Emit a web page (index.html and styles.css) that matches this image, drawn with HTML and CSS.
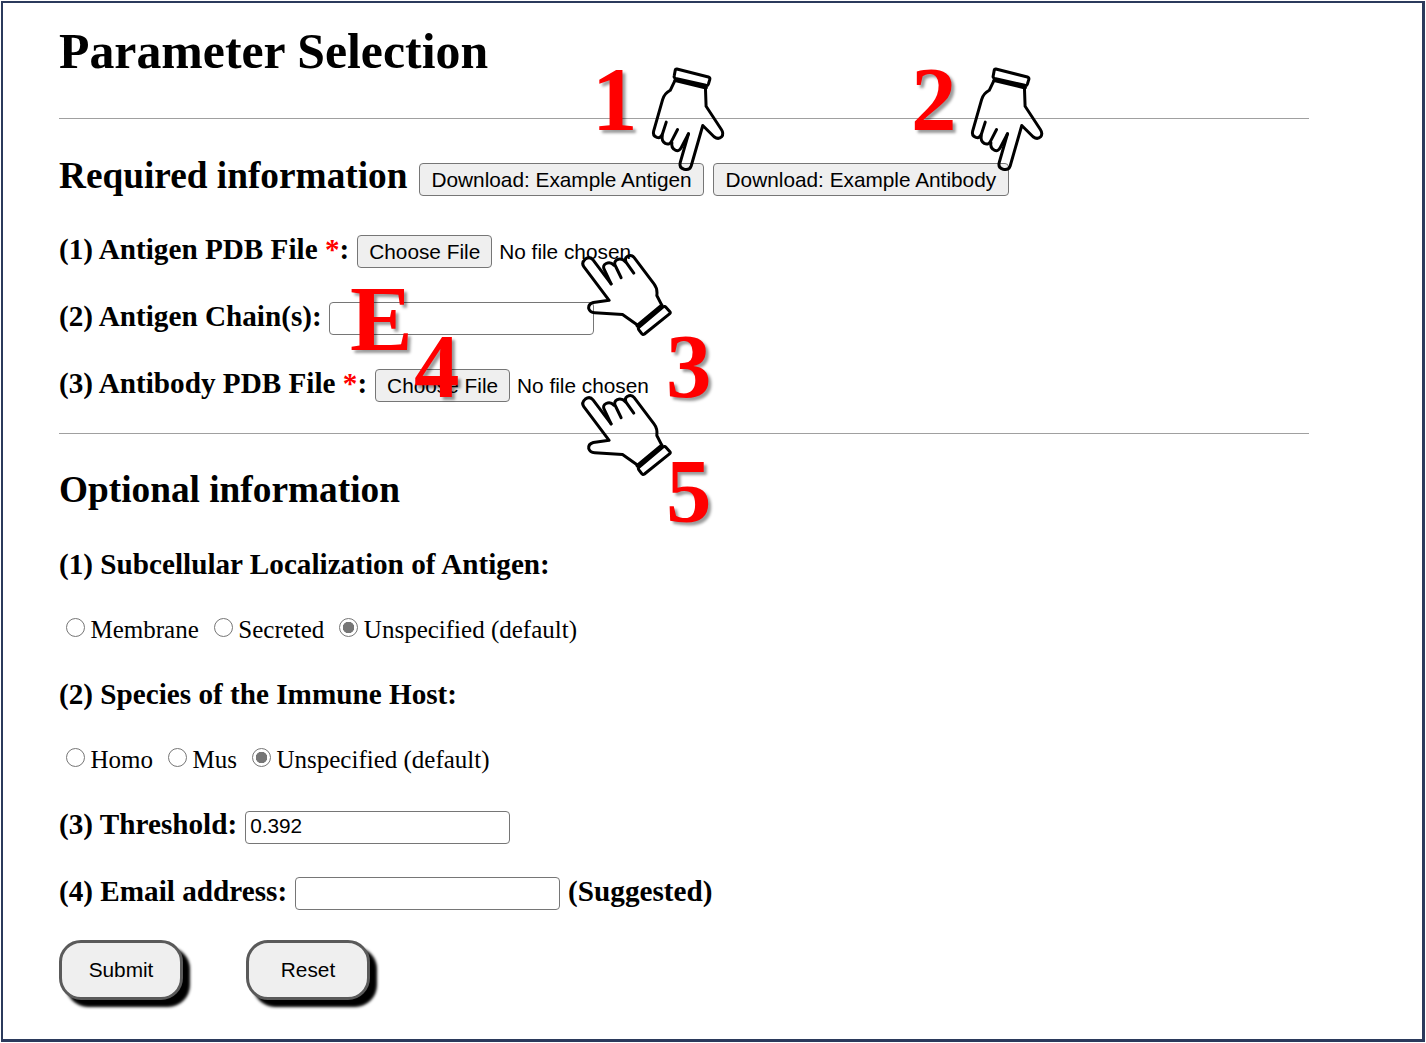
FILE: index.html
```html
<!DOCTYPE html>
<html lang="en">
<head>
  <meta charset="UTF-8" />
  <title>Parameter Selection</title>
  <link rel="stylesheet" href="styles.css">
</head>
<body>
  <svg class="defs" width="0" height="0">
    <symbol id="hand" viewBox="200 40 250 340">
      <path class="hand-line" d="M290 58 L385 82 Q391 84 389 90 L385 103 Q383 109 377 107 L286 86 Q280 84 282 78 L285 62 Q286 57 290 58 Z"/>
      <path class="hand-line hand-wrist" d="M285 92 L378 114"/>
      <path class="hand-line" d="M283 95 L270 122 Q252 132 247 150 L220 245 Q216 258 230 264 Q240 268 246 255 L258 218"/>
      <path class="hand-line" d="M246 258 Q243 275 255 282 Q268 288 274 275 L292 240"/>
      <path class="hand-line" d="M275 280 Q272 295 285 302 Q297 308 303 295 L325 253"/>
      <path class="hand-line" d="M325 253 L300 340 Q296 355 312 360 Q328 364 333 350 L368 228 L402 262 Q415 272 425 262 Q432 252 424 240 L378 170 L376 114"/>
    </symbol>
  </svg>

  <div class="page">
    <h1>Parameter Selection</h1>
    <hr>

    <form class="params">
      <div class="row row-head">
        <h2>Required information</h2>
        <button type="button" class="btn-download">Download: Example Antigen</button>
        <button type="button" class="btn-download btn-antibody">Download: Example Antibody</button>
      </div>

      <div class="row row-first">
        <label class="field-label label-file">(1) Antigen PDB File <span class="req">*</span>:</label>
        <input type="file" class="file-input">
      </div>

      <div class="row">
        <label class="field-label">(2) Antigen Chain(s):</label>
        <input type="text" class="text-input">
      </div>

      <div class="row">
        <label class="field-label label-file">(3) Antibody PDB File <span class="req">*</span>:</label>
        <input type="file" class="file-input">
      </div>

      <hr class="rule-2">

      <h2 class="optional">Optional information</h2>

      <div class="field-label block-label block-first">(1) Subcellular Localization of Antigen:</div>
      <div class="radios">
        <label class="radio"><input type="radio" name="loc">Membrane</label>
        <label class="radio"><input type="radio" name="loc">Secreted</label>
        <label class="radio"><input type="radio" name="loc" checked>Unspecified (default)</label>
      </div>

      <div class="field-label block-label">(2) Species of the Immune Host:</div>
      <div class="radios">
        <label class="radio"><input type="radio" name="host">Homo</label>
        <label class="radio"><input type="radio" name="host">Mus</label>
        <label class="radio"><input type="radio" name="host" checked>Unspecified (default)</label>
      </div>

      <div class="row row-threshold">
        <label class="field-label">(3) Threshold:</label>
        <input type="text" class="text-input" value="0.392">
      </div>

      <div class="row row-email">
        <label class="field-label">(4) Email address:</label>
        <input type="text" class="text-input">
        <span class="field-label">(Suggested)</span>
      </div>

      <div class="actions">
        <button type="button" class="btn-action">Submit</button>
        <button type="reset" class="btn-action">Reset</button>
      </div>
    </form>
  </div>

  <!-- annotations on top of the form -->
  <span class="mark mark-1">1</span>
  <span class="mark mark-2">2</span>
  <span class="mark mark-3">3</span>
  <span class="mark mark-4">4</span>
  <span class="mark mark-5">5</span>
  <span class="mark mark-e">E</span>
  <svg class="hand hand-1"><use href="#hand"/></svg>
  <svg class="hand hand-2"><use href="#hand"/></svg>
  <svg class="hand hand-3"><use href="#hand"/></svg>
  <svg class="hand hand-5"><use href="#hand"/></svg>
</body>
</html>
```

FILE: styles.css
```css
html, body {
  margin: 0;
  padding: 0;
  background: #fff;
}

body {
  display: flow-root;
  position: relative;
  width: 1426px;
  height: 1043px;
  overflow: hidden;
  font-family: "Liberation Serif", "Times New Roman", serif;
  color: #000;
}

.defs {
  position: absolute;
}

.page {
  box-sizing: border-box;
  width: 1424px;
  height: 1041px;
  margin: 1px;
  border-style: solid;
  border-color: #2b3a5c;
  border-width: 2px 3px 3px 2px;
  padding: 0 0 0 56px;
}

h1 {
  font-size: 49.8px;
  line-height: 56px;
  font-weight: bold;
  margin: 21px 0 0 0;
}

hr {
  width: 1250px;
  margin: 38px 0 0 0;
  border: 0;
  border-top: 1px solid #a0a0a0;
}

h2 {
  font-size: 37.3px;
  line-height: 42px;
  font-weight: bold;
  margin: 0;
}

.row {
  display: flex;
  align-items: center;
  height: 33px;
  margin-top: 34px;
}

.row-head {
  margin-top: 44px;
  gap: 9px;
}

.row-head h2 {
  margin: 0 3px 8px 0;
}

.row-first {
  margin-top: 39px;
}

.field-label {
  font-size: 29.2px;
  line-height: 33px;
  font-weight: bold;
  margin-right: 7px;
}

.row .field-label {
  margin-bottom: 4px;
}

.row .label-file,
.row-threshold .field-label,
.row-email .field-label {
  margin-right: 8px;
}

.req {
  color: #f00;
}

.btn-download {
  box-sizing: border-box;
  height: 33px;
  padding: 0 11px;
  font-family: "Liberation Sans", Arial, sans-serif;
  font-size: 20.8px;
  color: #000;
  background: #efefef;
  border: 1.5px solid #767676;
  border-radius: 4px;
}

.btn-antibody {
  padding: 0 12px;
}

.file-input {
  font-family: "Liberation Sans", Arial, sans-serif;
  font-size: 20.8px;
  width: 400px;
  color: #000;
}

.file-input::file-selector-button {
  box-sizing: border-box;
  height: 33px;
  padding: 0 11px;
  margin-right: 7px;
  font: inherit;
  color: #000;
  background: #efefef;
  border: 1.5px solid #767676;
  border-radius: 4px;
}

.text-input {
  box-sizing: border-box;
  width: 265px;
  height: 33px;
  padding: 0 4px 3px 4px;
  font-family: "Liberation Sans", Arial, sans-serif;
  font-size: 20.8px;
  color: #000;
  background: #fff;
  border: 1.5px solid #767676;
  border-radius: 4px;
}

.rule-2 {
  margin-top: 31px;
}

.optional {
  margin-top: 35px;
}

.block-label {
  margin-top: 32px;
}

.block-first {
  margin-top: 37px;
}

.radios {
  display: flex;
  gap: 15px;
  margin: 32px 0 0 7px;
}

.radio {
  display: flex;
  align-items: center;
  font-size: 25px;
  line-height: 33px;
}

.radio input {
  appearance: none;
  box-sizing: border-box;
  width: 19px;
  height: 19px;
  margin: 0 5.5px 5px 0;
  background: #fff;
  border: 1.5px solid #767676;
  border-radius: 50%;
}

.radio input:checked {
  background: radial-gradient(circle, #767676 0, #767676 5.5px, #fff 6px);
}

.row-threshold {
  margin-top: 35px;
}

.row-threshold .field-label {
  margin-bottom: 6px;
}

.row-email {
  margin-top: 33px;
}

.row-email .text-input {
  margin-right: 8px;
}

.actions {
  display: flex;
  gap: 64px;
  margin-top: 30px;
}

.btn-action {
  box-sizing: border-box;
  width: 124px;
  height: 60px;
  font-family: "Liberation Sans", Arial, sans-serif;
  font-size: 20.8px;
  color: #000;
  background: #efefef;
  border: 3px solid #5a5a5a;
  border-radius: 22px;
  box-shadow: 7px 7px 3px #000;
}

.btn-action + .btn-action {
  margin-left: -1px;
}

.mark {
  position: absolute;
  font-family: "Liberation Serif", "Times New Roman", serif;
  font-size: 91px;
  line-height: 91px;
  font-weight: bold;
  color: #f00;
  text-shadow: 3px 3px 3px rgba(0, 0, 0, 0.4);
}

.mark-1 { left: 592px; top: 54px; }
.mark-2 { left: 911px; top: 54px; }
.mark-3 { left: 666px; top: 321px; }
.mark-4 { left: 414px; top: 321px; }
.mark-5 { left: 666px; top: 446px; }
.mark-e { left: 350px; top: 271px; font-size: 94px; line-height: 94px; }

.hand {
  position: absolute;
  width: 83px;
  height: 113px;
  overflow: visible;
}

.hand-line {
  fill: none;
  stroke: #000;
  stroke-width: 9;
  stroke-linecap: round;
  stroke-linejoin: round;
}

.hand-wrist {
  stroke-width: 11;
}

.hand-1 { left: 647px; top: 63px; }
.hand-2 { left: 966px; top: 63px; }
.hand-3 { left: 581px; top: 236px; transform: rotate(127deg); }
.hand-5 { left: 581px; top: 376px; transform: rotate(127deg); }
```
